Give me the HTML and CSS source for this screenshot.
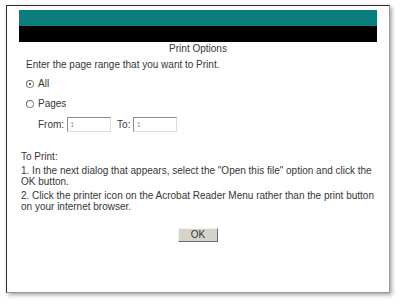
FILE: index.html
```html
<!DOCTYPE html>
<html>
<head>
<meta charset="utf-8">
<link rel="stylesheet" href="styles.css">
</head>
<body>
<div class="window">
  <div class="bar-teal"></div>
  <div class="bar-black"></div>
  <div class="title">Print Options</div>
  <div class="intro">Enter the page range that you want to Print.</div>
  <div class="opt opt-all"><span class="radio checked"></span><span>All</span></div>
  <div class="opt opt-pages"><span class="radio"></span><span>Pages</span></div>
  <div class="range">
    <span>From:</span><span class="field">1</span>
    <span class="to">To:</span><span class="field">1</span>
  </div>
  <div class="heading">To Print:</div>
  <p class="step">1. In the next dialog that appears, select the "Open this file" option and click the OK button.</p>
  <p class="step">2. Click the printer icon on the Acrobat Reader Menu rather than the print button on your internet browser.</p>
  <div class="actions"><span class="btn">OK</span></div>
</div>
</body>
</html>
```
FILE: styles.css
```css
html, body {
  margin: 0;
  padding: 0;
  background: #fff;
}
body {
  width: 400px;
  height: 304px;
  overflow: hidden;
  font-family: "Liberation Sans", Arial, sans-serif;
  font-size: 10px;
  color: #363636;
}
.window {
  box-sizing: border-box;
  margin: 5px 0 0 6px;
  width: 384px;
  height: 288px;
  border-left: 1px solid #2b2b2b;
  border-top: 1px solid #2b2b2b;
  border-right: 1px solid #9a9a9a;
  border-bottom: 1px solid #9a9a9a;
  box-shadow: 2px 2px 4px rgba(0, 0, 0, 0.35);
  padding: 4px 12px 0 12px;
  line-height: 12px;
}
.bar-teal {
  height: 16px;
  background: #0b7d7c;
}
.bar-black {
  height: 16px;
  background: #000;
}
.title {
  margin-top: 1px;
  text-align: center;
}
.intro {
  margin-top: 4px;
  padding-left: 7px;
}
.opt {
  display: flex;
  align-items: center;
  gap: 4px;
  padding-left: 7px;
}
.opt-all { margin-top: 7px; }
.opt-pages { margin-top: 8px; }
.radio {
  box-sizing: border-box;
  width: 8px;
  height: 8px;
  border: 1px solid #8a8a8a;
  border-top-color: #6a6a6a;
  border-left-color: #6a6a6a;
  border-radius: 50%;
  position: relative;
  background: #fff;
}
.radio.checked::after {
  content: "";
  position: absolute;
  left: 2px;
  top: 2px;
  width: 2px;
  height: 2px;
  border-radius: 50%;
  background: #222;
}
.range {
  display: flex;
  align-items: center;
  margin-top: 7px;
  padding-left: 19px;
  height: 15px;
}
.field {
  box-sizing: border-box;
  margin-left: 3px;
  width: 44px;
  height: 15px;
  border-top: 1px solid #8c8c8c;
  border-left: 1px solid #8c8c8c;
  border-right: 1px solid #dcdcdc;
  border-bottom: 1px solid #dcdcdc;
  color: #9a9a9a;
  font-size: 8px;
  line-height: 13px;
  padding-left: 2px;
}
.to {
  margin-left: 6px;
}
.heading {
  margin-top: 19px;
  padding-left: 2px;
  line-height: 11px;
}
.step {
  margin: 3px 0 0 0;
  padding-left: 2px;
  line-height: 11px;
}
.actions {
  display: flex;
  justify-content: center;
  margin-top: 16px;
}
.btn {
  box-sizing: border-box;
  width: 40px;
  height: 14px;
  background: #d6d3cc;
  border-top: 1px solid #f2f2f2;
  border-left: 1px solid #f2f2f2;
  border-right: 1px solid #6f6f6f;
  border-bottom: 1px solid #6f6f6f;
  text-align: center;
  line-height: 12px;
  font-size: 10px;
  color: #333;
}
```
